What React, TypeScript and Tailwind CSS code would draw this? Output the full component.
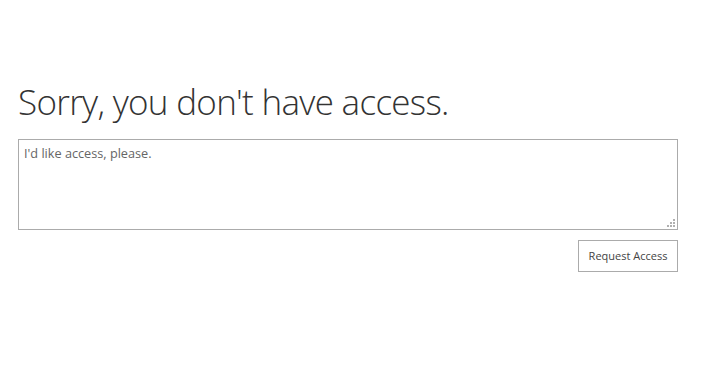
export default function App() {
  return (
    <div className="min-h-[376px] w-full bg-white pl-[18px] pr-[25px] pt-[78px] font-['Open_Sans',sans-serif]">
      <h1 className="text-[35px] leading-[48px] font-light text-[#333] tracking-[-0.7px]">
        Sorry, you don't have access.
      </h1>
      <div className="mt-[13px] flex flex-col items-end">
        <div className="relative w-full">
          <textarea
            className="block h-[91px] w-full resize-none border border-[#ababab] px-[5px] py-[5px] text-[12.7px] leading-[16px] text-[#666] outline-none"
            defaultValue="I'd like access, please."
          />
          {/* resize grip */}
          <svg className="absolute bottom-[3px] right-[3px]" width="9" height="9" viewBox="0 0 9 9" fill="#b0b0b0">
            <rect x="7" y="1" width="2" height="2" />
            <rect x="4" y="4" width="2" height="2" />
            <rect x="7" y="4" width="2" height="2" />
            <rect x="1" y="7" width="2" height="2" />
            <rect x="4" y="7" width="2" height="2" />
            <rect x="7" y="7" width="2" height="2" />
          </svg>
        </div>
        <button className="mt-[10px] h-[32px] w-[100px] border border-[#ababab] bg-white text-[11px] text-[#444]">
          Request Access
        </button>
      </div>
    </div>
  );
}
